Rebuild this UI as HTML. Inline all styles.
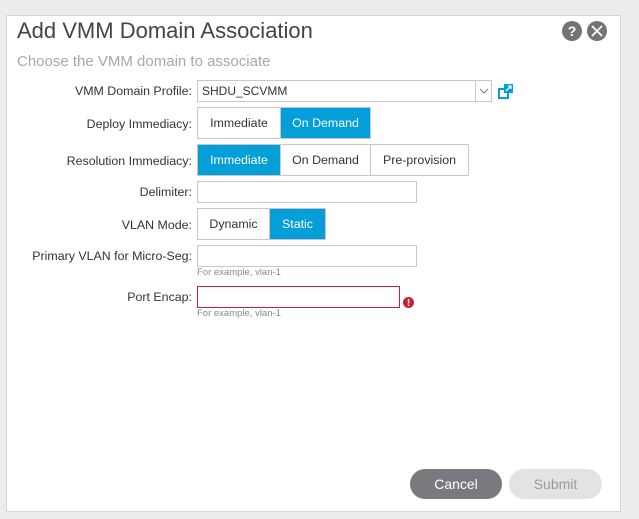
<!DOCTYPE html>
<html><head><style>
*{box-sizing:border-box;margin:0;padding:0}
body{width:639px;height:519px;background:#ececec;font-family:"Liberation Sans",sans-serif;position:relative;overflow:hidden}
.dlg{position:absolute;left:6px;top:15px;width:615px;height:497px;background:#fff;border:1px solid #d6d6d6}
.a{position:absolute}
.lbl{position:absolute;right:447px;font-size:12.4px;color:#333;text-align:right;white-space:nowrap}
.in{position:absolute;left:197px;border:1px solid #c8c8c8;background:#fff}
.seg{position:absolute;left:197px;display:flex;border:1px solid #c8c8c8}
.seg div{font-size:12.4px;color:#333;display:flex;align-items:center;justify-content:center;border-left:1px solid #c8c8c8}
.seg div:first-child{border-left:none}
.seg .on{background:#049fd9;color:#fff}
.hint{position:absolute;left:197px;font-size:9.5px;color:#888}
</style></head><body>
<div class="dlg"></div>
<div class="a" style="left:17px;top:18px;font-size:22px;color:#444">Add VMM Domain Association</div>
<div class="a" style="left:17px;top:53px;font-size:15px;color:#a8a8a8">Choose the VMM domain to associate</div>
<svg class="a" style="left:561px;top:20px" width="48" height="22">
<circle cx="11" cy="11" r="10" fill="#737373"/><text x="11" y="16" font-size="14" font-weight="bold" fill="#fff" text-anchor="middle" font-family="Liberation Sans">?</text>
<circle cx="36" cy="11" r="10" fill="#737373"/><path d="M31 6 L41 16 M41 6 L31 16" stroke="#fff" stroke-width="1.8"/>
</svg>
<div class="lbl" style="top:84px">VMM Domain Profile:</div>
<div class="in" style="top:80px;width:295px;height:22px;font-size:12px;color:#333;padding:3px 4px">SHDU_SCVMM</div>
<div class="a" style="left:475px;top:80px;width:1px;height:22px;background:#c8c8c8"></div>
<svg class="a" style="left:478px;top:86px" width="12" height="10"><path d="M2 3 L6 7 L10 3" stroke="#777" fill="none"/></svg>
<svg class="a" style="left:498px;top:83px" width="17" height="17"><rect x="1" y="6" width="9" height="9" fill="none" stroke="#049fd9" stroke-width="2"/><rect x="6" y="1" width="9" height="9" fill="#049fd9"/><path d="M8 8 L13 3 M10 3 H13 V6" stroke="#fff" stroke-width="1.3" fill="none"/></svg>

<div class="lbl" style="top:117px">Deploy Immediacy:</div>
<div class="seg" style="top:107px;height:32px"><div style="width:82px">Immediate</div><div class="on" style="width:90px">On Demand</div></div>

<div class="lbl" style="top:154px">Resolution Immediacy:</div>
<div class="seg" style="top:144px;height:32px"><div class="on" style="width:82px">Immediate</div><div style="width:90px">On Demand</div><div style="width:98px">Pre-provision</div></div>

<div class="lbl" style="top:185px">Delimiter:</div>
<div class="in" style="top:181px;width:220px;height:22px"></div>

<div class="lbl" style="top:218px">VLAN Mode:</div>
<div class="seg" style="top:208px;height:32px"><div style="width:71px">Dynamic</div><div class="on" style="width:56px">Static</div></div>

<div class="lbl" style="top:249px">Primary VLAN for Micro-Seg:</div>
<div class="in" style="top:245px;width:220px;height:22px"></div>
<div class="hint" style="top:267px">For example, vlan-1</div>

<div class="lbl" style="top:290px">Port Encap:</div>
<div class="in" style="top:286px;width:203px;height:22px;border-color:#c8202e"></div>
<svg class="a" style="left:403px;top:297px" width="11" height="11"><circle cx="5.5" cy="5.5" r="5.5" fill="#c8202e"/><rect x="4.8" y="2" width="1.5" height="4.5" fill="#fff"/><rect x="4.8" y="7.5" width="1.5" height="1.5" fill="#fff"/></svg>
<div class="hint" style="top:308px">For example, vlan-1</div>

<div class="a" style="left:410px;top:469px;width:92px;height:30px;border-radius:15px;background:#7a7a7e;color:#fff;font-size:14px;display:flex;align-items:center;justify-content:center">Cancel</div>
<div class="a" style="left:509px;top:469px;width:93px;height:30px;border-radius:15px;background:#e3e3e3;color:#9a9a9a;font-size:14px;display:flex;align-items:center;justify-content:center">Submit</div>
</body></html>
